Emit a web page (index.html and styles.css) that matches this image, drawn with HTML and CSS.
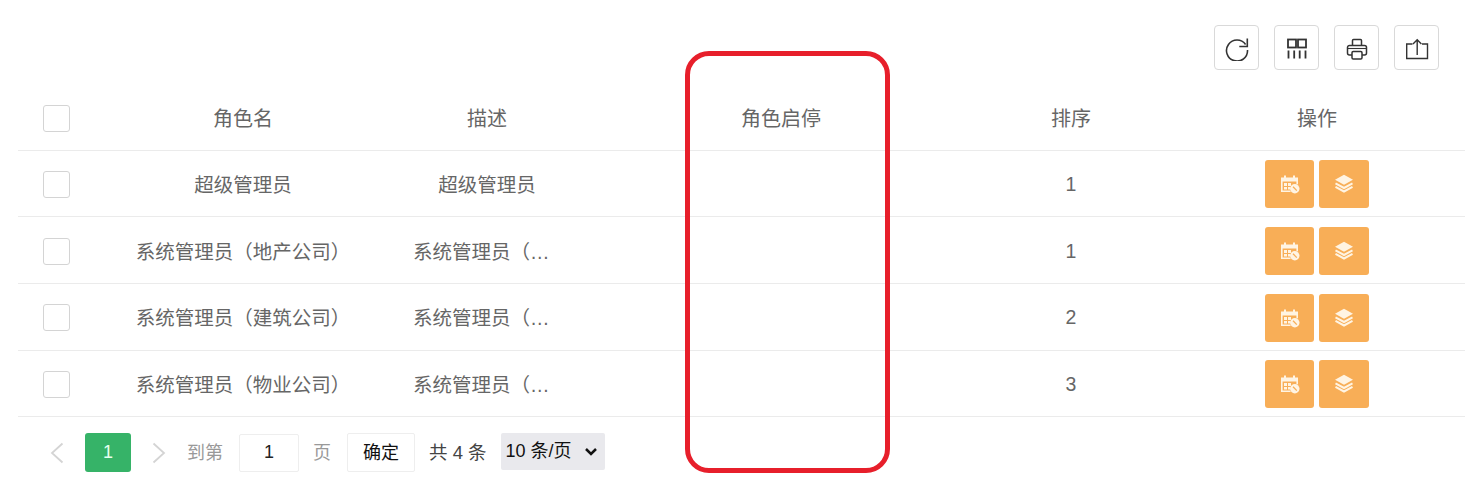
FILE: index.html
```html
<!DOCTYPE html>
<html lang="en">
<head>
    <meta charset="UTF-8">
    <meta name="viewport" content="width=device-width, initial-scale=1.0">
    <title>角色管理</title>
    <link rel="stylesheet" href="styles.css">
</head>
<body>

<div class="page">
    <div class="toolbar">
        <button class="tool-button">
            <svg width="26" height="26" viewBox="0 0 26 26" fill="none" stroke="#333" stroke-width="1.6"><path d="M21.600 9.500A10.500 10.500 0 1 0 23.500 15"/><path d="M23.300 3.500v8h-8"/></svg>
        </button>
        <button class="tool-button">
            <svg width="24" height="24" viewBox="0 0 24 24" fill="none" stroke="#333" stroke-width="1.8"><rect x="3" y="3.500" width="8" height="8"/><rect x="13" y="3.500" width="8" height="8"/><path d="M3.500 14.500v8M9.200 14.500v8M14.700 14.500v8M20.500 14.500v8"/></svg>
        </button>
        <button class="tool-button">
            <svg width="24" height="24" viewBox="0 0 24 24" fill="none" stroke="#333" stroke-width="1.5" stroke-linejoin="round"><path d="M7.500 9.500V4.500a1 1 0 0 1 1-1h7a1 1 0 0 1 1 1v5"/><path d="M7 19H4.500a2 2 0 0 1-2-2v-5.500a2 2 0 0 1 2-2h15a2 2 0 0 1 2 2V17a2 2 0 0 1-2 2H17"/><rect x="7" y="15.500" width="10" height="7.500" rx="1.200"/><path d="M3 12.500h18" stroke-width="1.100"/></svg>
        </button>
        <button class="tool-button">
            <svg width="24" height="24" viewBox="0 0 24 24" fill="none" stroke="#333" stroke-width="1.4"><path d="M7.500 8H1.700v14.500h20.800V8H17"/><path d="M12.200 19V4M8 8l4.200-4.200L16.400 8"/></svg>
        </button>
    </div>

    <div class="table-row table-head">
        <div class="check-cell"><span class="checkbox"></span></div>
        <div class="cell">角色名</div>
        <div class="cell">描述</div>
        <div class="cell">角色启停</div>
        <div class="cell">排序</div>
        <div class="cell">操作</div>
    </div>

    <div class="table-row">
        <div class="check-cell"><span class="checkbox"></span></div>
        <div class="cell">超级管理员</div>
        <div class="cell">超级管理员</div>
        <div class="cell"></div>
        <div class="cell num-cell">1</div>
        <div class="cell action-cell">
            <button class="action-button"><svg width="20" height="20" viewBox="0 0 20 20"><use href="#calendar"/></svg></button>
            <button class="action-button"><svg width="20" height="20" viewBox="0 0 20 20"><use href="#layers"/></svg></button>
        </div>
    </div>
    <div class="table-row">
        <div class="check-cell"><span class="checkbox"></span></div>
        <div class="cell">系统管理员（地产公司）</div>
        <div class="cell"><span class="desc">系统管理员（地产公司）</span></div>
        <div class="cell"></div>
        <div class="cell num-cell">1</div>
        <div class="cell action-cell">
            <button class="action-button"><svg width="20" height="20" viewBox="0 0 20 20"><use href="#calendar"/></svg></button>
            <button class="action-button"><svg width="20" height="20" viewBox="0 0 20 20"><use href="#layers"/></svg></button>
        </div>
    </div>
    <div class="table-row">
        <div class="check-cell"><span class="checkbox"></span></div>
        <div class="cell">系统管理员（建筑公司）</div>
        <div class="cell"><span class="desc">系统管理员（建筑公司）</span></div>
        <div class="cell"></div>
        <div class="cell num-cell">2</div>
        <div class="cell action-cell">
            <button class="action-button"><svg width="20" height="20" viewBox="0 0 20 20"><use href="#calendar"/></svg></button>
            <button class="action-button"><svg width="20" height="20" viewBox="0 0 20 20"><use href="#layers"/></svg></button>
        </div>
    </div>
    <div class="table-row">
        <div class="check-cell"><span class="checkbox"></span></div>
        <div class="cell">系统管理员（物业公司）</div>
        <div class="cell"><span class="desc">系统管理员（物业公司）</span></div>
        <div class="cell"></div>
        <div class="cell num-cell">3</div>
        <div class="cell action-cell">
            <button class="action-button"><svg width="20" height="20" viewBox="0 0 20 20"><use href="#calendar"/></svg></button>
            <button class="action-button"><svg width="20" height="20" viewBox="0 0 20 20"><use href="#layers"/></svg></button>
        </div>
    </div>

    <div class="pager">
        <svg class="pager-arrow" width="14" height="22" viewBox="0 0 14 22" fill="none" stroke="#d4d4d4" stroke-width="1.800"><path d="M12.500 1.500L2 11l10.500 9.500"/></svg>
        <span class="page-current">1</span>
        <svg class="pager-arrow" width="14" height="22" viewBox="0 0 14 22" fill="none" stroke="#d4d4d4" stroke-width="1.800"><path d="M1.500 1.500L12 11 1.500 20.500"/></svg>
        <span class="pager-label goto-label">到第</span>
        <input class="page-input" type="text" value="1">
        <span class="pager-label page-label">页</span>
        <button class="confirm-button">确定</button>
        <span class="total">共 4 条</span>
        <div class="size-wrap">
            <select class="size-select">
                <option>10 条/页</option>
                <option>20 条/页</option>
            </select>
            <svg class="size-arrow" width="12" height="8" viewBox="0 0 12 8" fill="none" stroke="#111" stroke-width="2.500"><path d="M1 1l5 5 5-5"/></svg>
        </div>
    </div>

    <div class="highlight"></div>
</div>

<!-- icons shared by the rows -->
<svg class="icon-defs" width="0" height="0">
    <symbol id="calendar" viewBox="0 0 20 20">
        <path fill="#fff4e3" d="M1 3.500h3V1.500h2v2h7v-2h2v2h3v7a5.500 5.500 0 0 0-1.600-.4V7.500H2.600v9H10c.2.600.5 1.100.9 1.500H1z"/>
        <path fill="#fff4e3" d="M4 9h3v3H4zM8 9h3v3H8zM4 13h3v2.500H4zM8 13h2.500v2.500H8z"/>
        <circle fill="#fff4e3" cx="14.800" cy="14.800" r="4.700"/>
        <path fill="none" stroke="#f8ae57" stroke-width="1.300" d="M13 12.800l3.800 3.800"/>
    </symbol>
    <symbol id="layers" viewBox="0 0 20 20">
        <path fill="#fff4e3" d="M10 .8l9 5-9 5-9-5z"/>
        <path fill="none" stroke="#fff4e3" stroke-width="2" d="M1.500 9.300l8.500 4.700 8.500-4.700"/>
        <path fill="none" stroke="#fff4e3" stroke-width="2" d="M1.500 12.800l8.500 4.700 8.500-4.700"/>
    </symbol>
</svg>

</body>
</html>
```

FILE: styles.css
```css
body {
    font-family: "Liberation Sans", "Noto Sans CJK SC", sans-serif;
    margin: 0;
    padding: 0;
    background-color: white;
    color: #666;
    font-size: 19.5px;
}

.page {
    position: relative;
    width: 1480px;
    height: 500px;
    padding: 25px 15px 0 18px;
    box-sizing: border-box;
    overflow: hidden;
}

.toolbar {
    display: flex;
    justify-content: flex-end;
    gap: 15px;
    padding-right: 26px;
    margin-bottom: 17px;
}

.tool-button {
    width: 45px;
    height: 45px;
    padding: 0;
    display: flex;
    align-items: center;
    justify-content: center;
    background-color: white;
    border: 1px solid #d9d9d9;
    border-radius: 4px;
}

.table-row {
    display: grid;
    grid-template-columns: 83px 284px 204px 384px 196px 296px;
    align-items: center;
    height: 66.7px;
    padding-top: 2px;
    box-sizing: border-box;
    border-bottom: 1px solid #ebebeb;
}

.table-head {
    height: 63.5px;
    padding-top: 0;
    font-size: 20px;
}

.check-cell {
    padding-left: 25px;
    display: flex;
}

.checkbox {
    width: 27px;
    height: 27px;
    box-sizing: border-box;
    border: 1px solid #d4d4d4;
    border-radius: 3px;
    background-color: white;
}

.cell {
    padding-bottom: 2px;
    text-align: center;
    white-space: nowrap;
}

.num-cell {
    padding-bottom: 0;
}

.desc {
    display: inline-block;
    width: 148px;
    overflow: hidden;
    text-overflow: ellipsis;
    text-align: left;
    vertical-align: middle;
}

.action-cell {
    display: flex;
    justify-content: center;
    gap: 5px;
    padding-bottom: 0;
}

.action-button {
    width: 49px;
    height: 48px;
    padding: 0;
    display: flex;
    align-items: center;
    justify-content: center;
    background-color: #f8ae57;
    border: none;
    border-radius: 3px;
}

.action-button + .action-button {
    width: 50px;
}

.pager {
    display: flex;
    align-items: center;
    height: 39px;
    margin-top: 16px;
    padding-left: 32px;
}

.pager-arrow {
    flex-shrink: 0;
}

.page-current {
    width: 46px;
    height: 39px;
    margin: 0 21px 0 21px;
    display: flex;
    align-items: center;
    justify-content: center;
    background-color: #36b368;
    color: #e8fff0;
    border-radius: 3px;
    font-size: 18px;
}

.pager-label {
    padding-bottom: 3px;
    color: #999;
    font-size: 18px;
}

.goto-label {
    margin-left: 21px;
}

.page-input {
    width: 60px;
    height: 38px;
    margin-left: 16px;
    padding: 0;
    box-sizing: border-box;
    border: 1px solid #eee;
    border-radius: 2px;
    text-align: center;
    font-family: inherit;
    font-size: 18px;
    color: #222;
}

.page-label {
    margin-left: 14px;
}

.confirm-button {
    width: 68px;
    height: 39px;
    margin-left: 16px;
    padding: 0 0 3px;
    background-color: white;
    border: 1px solid #eee;
    border-radius: 2px;
    font-family: inherit;
    font-size: 18px;
    color: #111;
}

.total {
    margin-left: 14px;
    padding-bottom: 4px;
    font-size: 18.5px;
    color: #444;
}

.size-wrap {
    position: relative;
    display: flex;
    margin-left: 14px;
    margin-bottom: 2px;
}

.size-select {
    appearance: none;
    width: 104px;
    height: 37px;
    padding: 0 0 2px 5px;
    border: none;
    border-radius: 2px;
    background-color: #e9e9ed;
    font-family: inherit;
    font-size: 18px;
    color: #111;
}

.size-arrow {
    position: absolute;
    right: 8px;
    top: 15px;
    pointer-events: none;
}

/* red marker drawn over the table */
.highlight {
    position: absolute;
    left: 685px;
    top: 51px;
    width: 205px;
    height: 422px;
    box-sizing: border-box;
    border: 5px solid #e71f2b;
    border-radius: 24px;
}

.icon-defs {
    position: absolute;
}
```
